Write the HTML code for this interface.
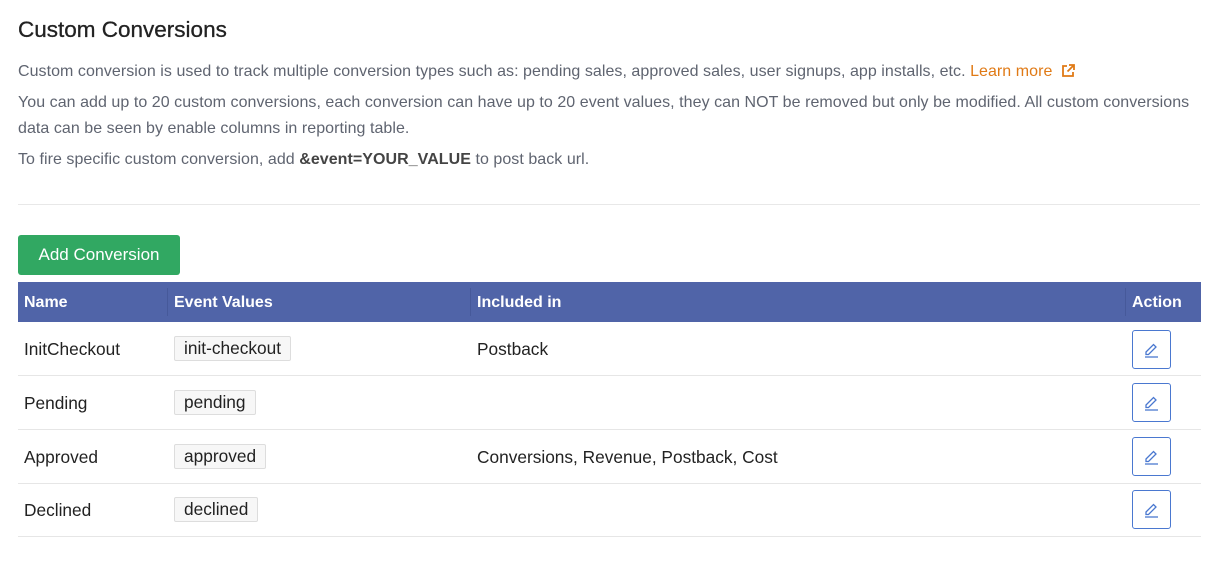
<!DOCTYPE html>
<html><head><meta charset="utf-8"><style>
*{box-sizing:border-box;margin:0;padding:0}
body{width:1215px;height:561px;background:#fff;font-family:"Liberation Sans",sans-serif;position:relative;overflow:hidden}
.a{position:absolute;white-space:nowrap}
h1{position:absolute;left:18px;top:17px;font-size:22.5px;font-weight:normal;color:#222;-webkit-text-stroke:0.3px #222}
.p{position:absolute;left:18px;font-size:16px;letter-spacing:0.05px;color:#5f6470}
.p b{color:#444}
.hr{position:absolute;left:18px;width:1182px;top:204px;height:1px;background:#e8e8e8}
.btn{position:absolute;left:18px;top:235px;width:162px;height:40px;background:#31a862;border-radius:3px;color:#fff;font-size:17px;line-height:40px;text-align:center}
.th{position:absolute;left:18px;top:282px;width:1183px;height:40px;background:#5064a8;color:#fff;font-weight:bold;font-size:16px}
.th span{position:absolute;top:12px}
.sep{position:absolute;top:6px;width:1px;height:28px;background:#46599a}
.row{position:absolute;left:18px;width:1183px;border-bottom:1px solid #e6e6e6;font-size:17.3px;color:#222}
.row span{position:absolute}
.tag{border:1px solid #ddd;background:#f7f7f7;border-radius:2px;padding:1px 9px;font-size:17.3px}
.ed{position:absolute;left:1114px;width:39px;height:39px;border:1px solid #4a78d0;border-radius:3px;background:#fff}
</style></head><body>
<h1>Custom Conversions</h1>
<div class="p a" style="top:63px">Custom conversion is used to track multiple conversion types such as: pending sales, approved sales, user signups, app installs, etc. <span style="color:#e07a16">Learn more</span> <svg width="16" height="16" viewBox="0 0 16 16" style="vertical-align:-3px;margin-left:3px"><path d="M7 3H3v10h10V9M9 2h5v5M14 2L7.5 8.5" fill="none" stroke="#e07a16" stroke-width="1.8"/></svg></div>
<div class="p a" style="top:94px">You can add up to 20 custom conversions, each conversion can have up to 20 event values, they can NOT be removed but only be modified. All custom conversions</div>
<div class="p a" style="top:120px">data can be seen by enable columns in reporting table.</div>
<div class="p a" style="top:151px">To fire specific custom conversion, add <b>&amp;event=YOUR_VALUE</b> to post back url.</div>
<div class="hr"></div>
<div class="btn">Add Conversion</div>
<div class="th"><span style="left:6px">Name</span><div class="sep" style="left:149px"></div><span style="left:156px">Event Values</span><div class="sep" style="left:452px"></div><span style="left:459px">Included in</span><div class="sep" style="left:1107px"></div><span style="left:1114px">Action</span></div>

<div class="row" style="top:322px;height:54px"><span style="left:6px;top:17px">InitCheckout</span><span class="tag" style="left:156px;top:14px">init-checkout</span><span style="left:459px;top:17px">Postback</span><div class="ed" style="top:8px"><svg width="37" height="37" viewBox="0 0 37 37"><path d="M13 21l7.5-7.5 2.5 2.5-7.5 7.5H13z" fill="none" stroke="#4a78d0" stroke-width="1.3"/><path d="M12 26h13" stroke="#4a78d0" stroke-width="1.3"/></svg></div></div>
<div class="row" style="top:376px;height:54px"><span style="left:6px;top:17px">Pending</span><span class="tag" style="left:156px;top:14px">pending</span><div class="ed" style="top:7px"><svg width="37" height="37" viewBox="0 0 37 37"><path d="M13 21l7.5-7.5 2.5 2.5-7.5 7.5H13z" fill="none" stroke="#4a78d0" stroke-width="1.3"/><path d="M12 26h13" stroke="#4a78d0" stroke-width="1.3"/></svg></div></div>
<div class="row" style="top:430px;height:54px"><span style="left:6px;top:17px">Approved</span><span class="tag" style="left:156px;top:14px">approved</span><span style="left:459px;top:17px">Conversions, Revenue, Postback, Cost</span><div class="ed" style="top:7px"><svg width="37" height="37" viewBox="0 0 37 37"><path d="M13 21l7.5-7.5 2.5 2.5-7.5 7.5H13z" fill="none" stroke="#4a78d0" stroke-width="1.3"/><path d="M12 26h13" stroke="#4a78d0" stroke-width="1.3"/></svg></div></div>
<div class="row" style="top:484px;height:53px"><span style="left:6px;top:16px">Declined</span><span class="tag" style="left:156px;top:13px">declined</span><div class="ed" style="top:6px"><svg width="37" height="37" viewBox="0 0 37 37"><path d="M13 21l7.5-7.5 2.5 2.5-7.5 7.5H13z" fill="none" stroke="#4a78d0" stroke-width="1.3"/><path d="M12 26h13" stroke="#4a78d0" stroke-width="1.3"/></svg></div></div>
</body></html>
